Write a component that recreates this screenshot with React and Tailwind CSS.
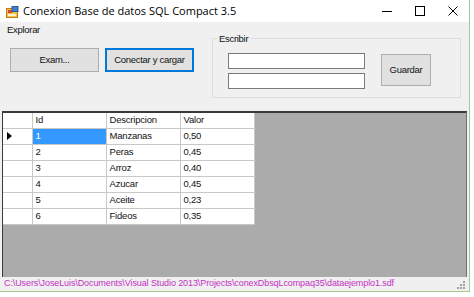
const ROWS = [
  { id: '1', desc: 'Manzanas', val: '0,50' },
  { id: '2', desc: 'Peras', val: '0,45' },
  { id: '3', desc: 'Arroz', val: '0,40' },
  { id: '4', desc: 'Azucar', val: '0,45' },
  { id: '5', desc: 'Aceite', val: '0,23' },
  { id: '6', desc: 'Fideos', val: '0,35' },
];

const ui = { fontFamily: '"Liberation Sans", Arial, sans-serif' };
const seg = { fontFamily: '"Open Sans", "Noto Sans", sans-serif' };

function AppIcon() {
  return (
    <svg width="13" height="12" viewBox="0 0 13 12">
      <rect x="0.5" y="2.5" width="11" height="9" fill="#f4c04a" stroke="#c07a1a" />
      <rect x="2" y="4" width="4" height="3" fill="#d9442b" />
      <rect x="6" y="0.5" width="6" height="5" fill="#3f7fd0" stroke="#2a5a9a" />
      <rect x="2" y="8" width="8" height="2" fill="#fff3c8" />
    </svg>
  );
}

function Button({ children, className = '', focused = false }) {
  return (
    <div
      className={`flex items-center justify-center bg-[#e1e1e1] text-[9.5px] tracking-[-0.3px] text-[#111] whitespace-nowrap ${
        focused ? 'border-2 border-[#0078d7]' : 'border border-[#adadad]'
      } ${className}`}
      style={ui}
    >
      {children}
    </div>
  );
}

export default function App() {
  return (
    <div className="w-[474px] h-[297px] bg-white overflow-hidden">
      <div className="w-[470px] h-[292px] flex flex-col border-r border-b border-[#a9c98f]">
        {/* barra de titulo */}
        <div className="h-[22px] flex items-center bg-white">
          <div className="ml-[6px] mt-[2px]"><AppIcon /></div>
          <div className="ml-[4px] text-[11px] text-black" style={seg}>
            Conexion Base de datos SQL Compact 3.5
          </div>
          <div className="ml-auto flex items-center h-full">
            <div className="w-[33px] flex justify-center">
              <div className="w-[10px] h-px bg-black" />
            </div>
            <div className="w-[33px] flex justify-center">
              <div className="w-[10px] h-[10px] border border-black" />
            </div>
            <div className="w-[33px] flex justify-center">
              <svg width="10" height="10" viewBox="0 0 10 10">
                <path d="M0.5 0.5 L9.5 9.5 M9.5 0.5 L0.5 9.5" stroke="#000" strokeWidth="1" />
              </svg>
            </div>
          </div>
        </div>

        <div className="flex-1 flex flex-col bg-[#f0f0f0]">
          {/* parte superior */}
          <div className="h-[89px] flex items-start">
            <div className="pl-[7px] w-[195px]">
              <div className="text-[9.5px] tracking-[-0.3px] leading-[13px] pt-[1px] text-[#111]" style={ui}>Explorar</div>
              <div className="mt-[12px] ml-[3px] flex gap-[6px]">
                <Button className="w-[89px] h-[24px]">Exam...</Button>
                <Button className="w-[89px] h-[24px]" focused>Conectar y cargar</Button>
              </div>
            </div>
            <div className="relative ml-[17px] mt-[16px] w-[249px] h-[60px] border border-[#dcdcdc] rounded-[2px]">
              <div className="absolute -top-[7px] left-[4px] px-[2px] bg-[#f0f0f0] text-[9.5px] tracking-[-0.3px] leading-[13px] text-[#111]" style={ui}>
                Escribir
              </div>
              <div className="flex items-start pt-[14px] pl-[15px]">
                <div className="flex flex-col gap-[4px]">
                  <div className="w-[137px] h-[16px] bg-white border border-[#7a7a7a]" />
                  <div className="w-[137px] h-[16px] bg-white border border-[#7a7a7a]" />
                </div>
                <Button className="ml-[16px] mt-[1px] w-[50px] h-[32px]">Guardar</Button>
              </div>
            </div>
          </div>

          {/* grilla */}
          <div className="mx-[2px] h-[166px] bg-[#ababab] border-t-2 border-l border-[#3a3a3a] border-r border-r-[#6f6f6f]">
            <table className="border-collapse text-[9.5px] tracking-[-0.2px] leading-[12px] text-[#111]" style={ui}>
              <thead>
                <tr className="h-[15px] bg-white">
                  <th className="w-[29px] border border-[#c8c8c8] border-l-0 border-t-0" />
                  <th className="w-[74px] border border-[#c8c8c8] border-t-0 font-normal text-left pl-[3px]">Id</th>
                  <th className="w-[74px] border border-[#c8c8c8] border-t-0 font-normal text-left pl-[3px]">Descripcion</th>
                  <th className="w-[74px] border border-[#c8c8c8] border-t-0 font-normal text-left pl-[3px]">Valor</th>
                </tr>
              </thead>
              <tbody>
                {ROWS.map((r, i) => (
                  <tr key={r.id} className="h-[16px] bg-white">
                    <td className="border border-[#c8c8c8] border-l-0 pl-[4px]">
                      {i === 0 && (
                        <svg width="5" height="8" viewBox="0 0 5 8" className="block">
                          <path d="M0 0 L5 4 L0 8 Z" fill="#000" />
                        </svg>
                      )}
                    </td>
                    <td className={`border border-[#c8c8c8] pl-[3px] ${i === 0 ? 'bg-[#3399ff] text-white' : ''}`}>{r.id}</td>
                    <td className="border border-[#c8c8c8] pl-[3px]">{r.desc}</td>
                    <td className="border border-[#c8c8c8] pl-[3px]">{r.val}</td>
                  </tr>
                ))}
              </tbody>
            </table>
          </div>

          {/* barra de estado */}
          <div className="flex-1 flex items-center pl-[4px] pr-[4px] bg-[#f0f0f0]">
            <div className="text-[9px] tracking-[-0.1px] text-[#c530c5] whitespace-nowrap" style={ui}>
              C:\Users\JoseLuis\Documents\Visual Studio 2013\Projects\conexDbsqLcompaq35\dataejemplo1.sdf
            </div>
            <div className="ml-auto self-end mb-[2px] grid grid-cols-3 gap-[1px]">
              {[0, 0, 1, 0, 1, 1, 1, 1, 1].map((v, k) => (
                <div key={k} className={`w-[2px] h-[2px] ${v ? 'bg-[#a0a0a0]' : ''}`} />
              ))}
            </div>
          </div>
        </div>
      </div>
    </div>
  );
}
